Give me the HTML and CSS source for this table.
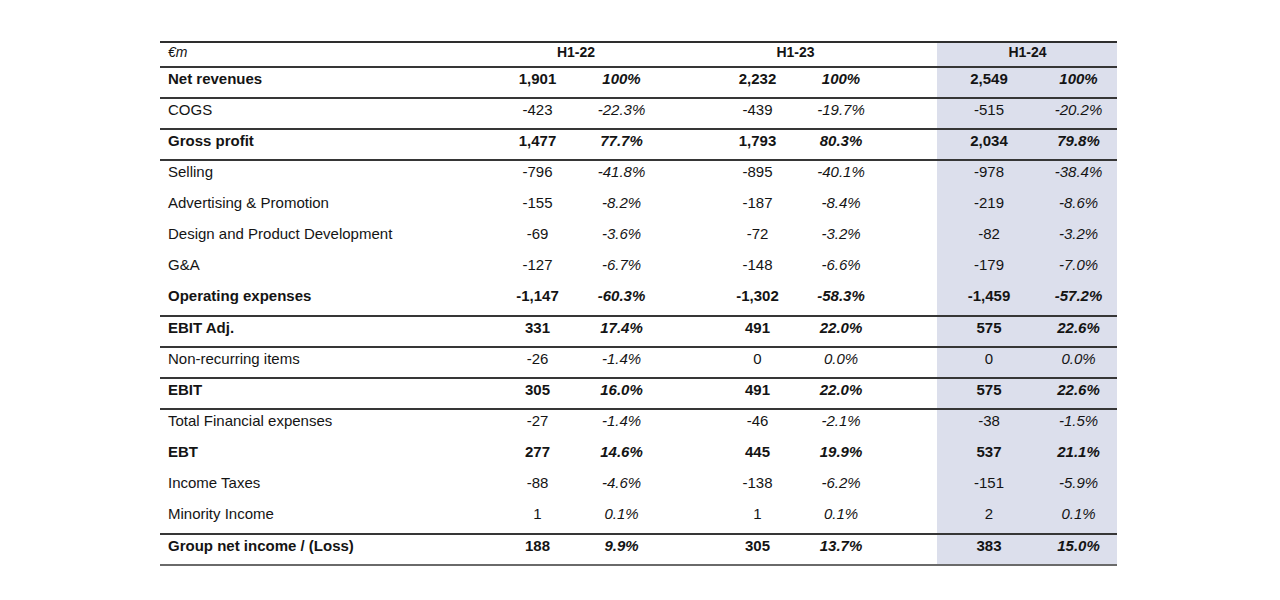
FILE: index.html
```html
<!DOCTYPE html>
<html lang="en">
<head>
<meta charset="utf-8">
<title>P&amp;L H1</title>
<link rel="stylesheet" href="styles.css">
</head>
<body>
<div class="table">
  <div class="row head">
    <div class="label unit">€m</div>
    <div class="period g1">H1-22</div>
    <div class="period g2">H1-23</div>
    <div class="period g3">H1-24</div>
  </div>

  <div class="row bold line">
    <div class="label">Net revenues</div>
    <div class="v">1,901</div><div class="p">100%</div><div></div>
    <div class="v">2,232</div><div class="p">100%</div><div></div>
    <div class="v">2,549</div><div class="p">100%</div>
  </div>
  <div class="row line">
    <div class="label">COGS</div>
    <div class="v">-423</div><div class="p">-22.3%</div><div></div>
    <div class="v">-439</div><div class="p">-19.7%</div><div></div>
    <div class="v">-515</div><div class="p">-20.2%</div>
  </div>
  <div class="row bold line">
    <div class="label">Gross profit</div>
    <div class="v">1,477</div><div class="p">77.7%</div><div></div>
    <div class="v">1,793</div><div class="p">80.3%</div><div></div>
    <div class="v">2,034</div><div class="p">79.8%</div>
  </div>
  <div class="row line">
    <div class="label">Selling</div>
    <div class="v">-796</div><div class="p">-41.8%</div><div></div>
    <div class="v">-895</div><div class="p">-40.1%</div><div></div>
    <div class="v">-978</div><div class="p">-38.4%</div>
  </div>
  <div class="row">
    <div class="label">Advertising &amp; Promotion</div>
    <div class="v">-155</div><div class="p">-8.2%</div><div></div>
    <div class="v">-187</div><div class="p">-8.4%</div><div></div>
    <div class="v">-219</div><div class="p">-8.6%</div>
  </div>
  <div class="row">
    <div class="label">Design and Product Development</div>
    <div class="v">-69</div><div class="p">-3.6%</div><div></div>
    <div class="v">-72</div><div class="p">-3.2%</div><div></div>
    <div class="v">-82</div><div class="p">-3.2%</div>
  </div>
  <div class="row">
    <div class="label">G&amp;A</div>
    <div class="v">-127</div><div class="p">-6.7%</div><div></div>
    <div class="v">-148</div><div class="p">-6.6%</div><div></div>
    <div class="v">-179</div><div class="p">-7.0%</div>
  </div>
  <div class="row bold">
    <div class="label">Operating expenses</div>
    <div class="v">-1,147</div><div class="p">-60.3%</div><div></div>
    <div class="v">-1,302</div><div class="p">-58.3%</div><div></div>
    <div class="v">-1,459</div><div class="p">-57.2%</div>
  </div>
  <div class="row bold line">
    <div class="label">EBIT Adj.</div>
    <div class="v">331</div><div class="p">17.4%</div><div></div>
    <div class="v">491</div><div class="p">22.0%</div><div></div>
    <div class="v">575</div><div class="p">22.6%</div>
  </div>
  <div class="row line">
    <div class="label">Non-recurring items</div>
    <div class="v">-26</div><div class="p">-1.4%</div><div></div>
    <div class="v">0</div><div class="p">0.0%</div><div></div>
    <div class="v">0</div><div class="p">0.0%</div>
  </div>
  <div class="row bold line">
    <div class="label">EBIT</div>
    <div class="v">305</div><div class="p">16.0%</div><div></div>
    <div class="v">491</div><div class="p">22.0%</div><div></div>
    <div class="v">575</div><div class="p">22.6%</div>
  </div>
  <div class="row line">
    <div class="label">Total Financial expenses</div>
    <div class="v">-27</div><div class="p">-1.4%</div><div></div>
    <div class="v">-46</div><div class="p">-2.1%</div><div></div>
    <div class="v">-38</div><div class="p">-1.5%</div>
  </div>
  <div class="row bold">
    <div class="label">EBT</div>
    <div class="v">277</div><div class="p">14.6%</div><div></div>
    <div class="v">445</div><div class="p">19.9%</div><div></div>
    <div class="v">537</div><div class="p">21.1%</div>
  </div>
  <div class="row">
    <div class="label">Income Taxes</div>
    <div class="v">-88</div><div class="p">-4.6%</div><div></div>
    <div class="v">-138</div><div class="p">-6.2%</div><div></div>
    <div class="v">-151</div><div class="p">-5.9%</div>
  </div>
  <div class="row">
    <div class="label">Minority Income</div>
    <div class="v">1</div><div class="p">0.1%</div><div></div>
    <div class="v">1</div><div class="p">0.1%</div><div></div>
    <div class="v">2</div><div class="p">0.1%</div>
  </div>
  <div class="row bold line last">
    <div class="label">Group net income / (Loss)</div>
    <div class="v">188</div><div class="p">9.9%</div><div></div>
    <div class="v">305</div><div class="p">13.7%</div><div></div>
    <div class="v">383</div><div class="p">15.0%</div>
  </div>
</div>
</body>
</html>
```

FILE: styles.css
```css
html, body {
  margin: 0;
  padding: 0;
  background: #ffffff;
}

body {
  font-family: "Liberation Sans", Arial, sans-serif;
  color: #141414;
}

.table {
  width: 957px;
  margin: 41px 0 0 160px;
  background: linear-gradient(to right, transparent 777px, #dcdfec 777px);
}

.row {
  display: grid;
  grid-template-columns: 332px 91px 77px 52px 91px 76px 59px 102px 77px;
  box-sizing: border-box;
  height: 31.15px;
  border-top: 2px solid transparent;
  font-size: 15px;
  line-height: 17px;
}

.row > div {
  padding-top: 2px;
  white-space: nowrap;
}

.row.line {
  border-top-color: #363636;
}

.row.last {
  border-bottom: 2px solid #6a6a6a;
  height: 33.15px;
}

.head {
  height: 24.5px;
  border-top-color: #2e2e2e;
  font-size: 14px;
}

.head > div {
  padding-top: 1px;
}

.label {
  padding-left: 8px;
}

.unit {
  font-style: italic;
}

.period {
  font-weight: bold;
  text-align: center;
}

.g1 { grid-column: 2 / 4; }
.g2 { grid-column: 5 / 7; }
.g3 { grid-column: 8 / 10; }

.v {
  text-align: center;
}

.p {
  text-align: center;
  font-style: italic;
}

.bold {
  font-weight: bold;
}
```
